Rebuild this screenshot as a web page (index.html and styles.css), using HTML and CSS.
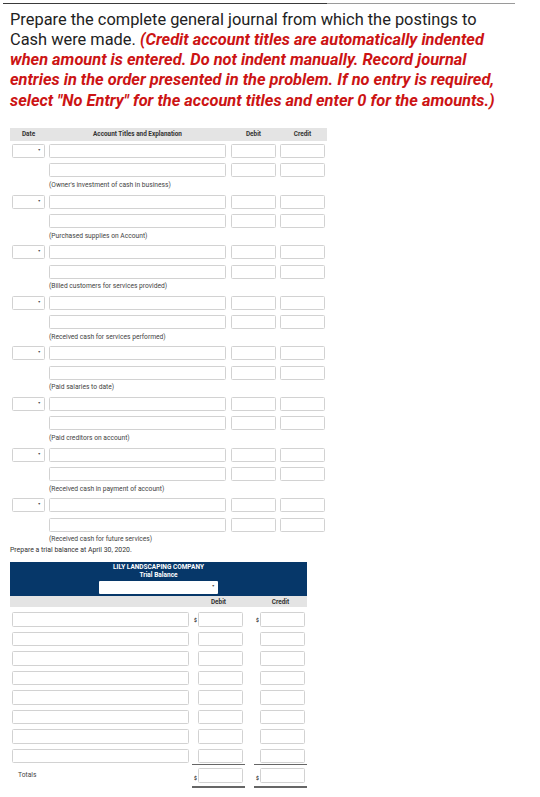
FILE: index.html
```html
<!DOCTYPE html>
<html lang="en">
<head>
<meta charset="utf-8">
<title>General Journal</title>
<link rel="stylesheet" href="styles.css">
</head>
<body>
<div class="topline"><span class="seg-dark"></span><span class="seg-light"></span></div>
<p class="prompt">Prepare the complete general journal from which the postings to Cash were made. <em class="note">(Credit account titles are automatically indented when amount is entered. Do not indent manually. Record journal entries in the order presented in the problem. If no entry is required, select "No Entry" for the account titles and enter 0 for the amounts.)</em></p>

<section class="journal">
  <div class="jgrid jhead">
    <span>Date</span><span>Account Titles and Explanation</span><span>Debit</span><span>Credit</span>
  </div>
  <div class="entries">
    <div class="entry">
      <div class="jgrid jrow"><span class="field sel"><span class="arrow">&#9660;</span></span><span class="field"></span><span class="field"></span><span class="field"></span></div>
      <div class="jgrid jrow"><span></span><span class="field"></span><span class="field"></span><span class="field"></span></div>
      <div class="expl">(Owner's investment of cash in business)</div>
    </div>
    <div class="entry">
      <div class="jgrid jrow"><span class="field sel"><span class="arrow">&#9660;</span></span><span class="field"></span><span class="field"></span><span class="field"></span></div>
      <div class="jgrid jrow"><span></span><span class="field"></span><span class="field"></span><span class="field"></span></div>
      <div class="expl">(Purchased supplies on Account)</div>
    </div>
    <div class="entry">
      <div class="jgrid jrow"><span class="field sel"><span class="arrow">&#9660;</span></span><span class="field"></span><span class="field"></span><span class="field"></span></div>
      <div class="jgrid jrow"><span></span><span class="field"></span><span class="field"></span><span class="field"></span></div>
      <div class="expl">(Billed customers for services provided)</div>
    </div>
    <div class="entry">
      <div class="jgrid jrow"><span class="field sel"><span class="arrow">&#9660;</span></span><span class="field"></span><span class="field"></span><span class="field"></span></div>
      <div class="jgrid jrow"><span></span><span class="field"></span><span class="field"></span><span class="field"></span></div>
      <div class="expl">(Received cash for services performed)</div>
    </div>
    <div class="entry">
      <div class="jgrid jrow"><span class="field sel"><span class="arrow">&#9660;</span></span><span class="field"></span><span class="field"></span><span class="field"></span></div>
      <div class="jgrid jrow"><span></span><span class="field"></span><span class="field"></span><span class="field"></span></div>
      <div class="expl">(Paid salaries to date)</div>
    </div>
    <div class="entry">
      <div class="jgrid jrow"><span class="field sel"><span class="arrow">&#9660;</span></span><span class="field"></span><span class="field"></span><span class="field"></span></div>
      <div class="jgrid jrow"><span></span><span class="field"></span><span class="field"></span><span class="field"></span></div>
      <div class="expl">(Paid creditors on account)</div>
    </div>
    <div class="entry">
      <div class="jgrid jrow"><span class="field sel"><span class="arrow">&#9660;</span></span><span class="field"></span><span class="field"></span><span class="field"></span></div>
      <div class="jgrid jrow"><span></span><span class="field"></span><span class="field"></span><span class="field"></span></div>
      <div class="expl">(Received cash in payment of account)</div>
    </div>
    <div class="entry">
      <div class="jgrid jrow"><span class="field sel"><span class="arrow">&#9660;</span></span><span class="field"></span><span class="field"></span><span class="field"></span></div>
      <div class="jgrid jrow"><span></span><span class="field"></span><span class="field"></span><span class="field"></span></div>
      <div class="expl">(Received cash for future services)</div>
    </div>
  </div>
</section>

<p class="tbprompt">Prepare a trial balance at April 30, 2020.</p>

<section class="tb">
  <div class="tbhead">
    <div class="tbtitle">LILY LANDSCAPING COMPANY</div>
    <div class="tbtitle">Trial Balance</div>
    <span class="field tbsel"><span class="arrow">&#9660;</span></span>
  </div>
  <div class="tbgrid tbcols"><span></span><span class="colh">Debit</span><span class="colh">Credit</span></div>
  <div class="tbrows">
    <div class="tbgrid tbrow"><span class="field"></span><span class="money"><span class="cur">$</span><span class="field amt"></span></span><span class="money"><span class="cur">$</span><span class="field amt"></span></span></div>
    <div class="tbgrid tbrow"><span class="field"></span><span class="money"><span class="field amt"></span></span><span class="money"><span class="field amt"></span></span></div>
    <div class="tbgrid tbrow"><span class="field"></span><span class="money"><span class="field amt"></span></span><span class="money"><span class="field amt"></span></span></div>
    <div class="tbgrid tbrow"><span class="field"></span><span class="money"><span class="field amt"></span></span><span class="money"><span class="field amt"></span></span></div>
    <div class="tbgrid tbrow"><span class="field"></span><span class="money"><span class="field amt"></span></span><span class="money"><span class="field amt"></span></span></div>
    <div class="tbgrid tbrow"><span class="field"></span><span class="money"><span class="field amt"></span></span><span class="money"><span class="field amt"></span></span></div>
    <div class="tbgrid tbrow"><span class="field"></span><span class="money"><span class="field amt"></span></span><span class="money"><span class="field amt"></span></span></div>
    <div class="tbgrid tbrow last"><span class="field"></span><span class="money"><span class="field amt"></span></span><span class="money"><span class="field amt"></span></span></div>
  </div>
  <div class="tbgrid totals"><span class="tlabel">Totals</span><span class="money"><span class="cur">$</span><span class="field amt"></span></span><span class="money"><span class="cur">$</span><span class="field amt"></span></span></div>
</section>
</body>
</html>
```

FILE: styles.css
```css
html, body {
  margin: 0;
  padding: 0;
  background: #ffffff;
}
body {
  font-family: Roboto, "Liberation Sans", Arial, sans-serif;
  color: #222;
}
.topline {
  display: flex;
  margin: 3px 0 0 3px;
  width: 512px;
  height: 1px;
}
.seg-dark { flex: 0 0 324px; background: #3a3a3a; }
.seg-light { flex: 1 1 auto; background: #9a9a9a; }

.prompt {
  margin: 5.5px 0 0 10px;
  width: 505px;
  font-size: 16.4px;
  line-height: 20.3px;
  color: #222;
}
.note {
  color: #cc1414;
  font-weight: 700;
  font-style: italic;
}

.journal {
  margin: 17px 0 0 10px;
  width: 317px;
}
.jgrid {
  display: grid;
  grid-template-columns: 33px 178px 45px 45px;
  column-gap: 4px;
  padding-left: 2px;
}
.jgrid > :nth-child(2) { margin-right: 1px; }
.jhead {
  background: #e4e4e4;
  height: 13px;
  align-items: center;
  font-size: 6.4px;
  font-weight: 700;
  color: #333;
  text-align: center;
}
.entries {
  margin-top: 3px;
  display: flex;
  flex-direction: column;
  row-gap: 3.6px;
}
.entry {
  display: flex;
  flex-direction: column;
  row-gap: 5.5px;
}
.jrow { height: 14px; }
.field {
  display: block;
  box-sizing: border-box;
  height: 100%;
  border: 1px solid #d2d2d2;
  border-radius: 1.5px;
  background: #fff;
  position: relative;
}
.sel .arrow,
.tbsel .arrow {
  position: absolute;
  right: 3px;
  top: 50%;
  transform: translateY(-50%);
  font-size: 3.5px;
  line-height: 1;
  color: #555;
}
.expl {
  margin-top: -3px;
  line-height: 11px;
  font-size: 6.7px;
  color: #444;
  padding-left: 39px;
}

.tbprompt {
  margin: 0 0 0 10px;
  line-height: 10px;
  font-size: 6.9px;
  color: #333;
}

.tb {
  margin: 7px 0 0 10px;
  width: 297px;
}
.tbhead {
  background: #063769;
  color: #fff;
  height: 34px;
  box-sizing: border-box;
  padding-top: 2px;
  display: flex;
  flex-direction: column;
  align-items: center;
}
.tbtitle {
  font-size: 6.5px;
  font-weight: 700;
  line-height: 7.5px;
}
.tbsel {
  margin-top: 1.5px;
  width: 119px;
  height: 13.5px;
  flex: 0 0 auto;
  border: none;
  border-radius: 1px;
}
.tbgrid {
  display: grid;
  grid-template-columns: 177px 56px 62px;
  padding-left: 2px;
}
.tbgrid > :nth-child(2) { margin-left: 3px; }
.tbgrid > :nth-child(3) { margin-left: 9px; }
.tbcols {
  background: #e4e4e4;
  height: 11px;
  align-items: center;
  font-size: 6.4px;
  font-weight: 700;
  color: #333;
}
.colh { text-align: center; }
.tbrows {
  margin-top: 5px;
  display: flex;
  flex-direction: column;
  row-gap: 5px;
}
.tbrow { height: 14.5px; }
.money {
  display: flex;
  align-items: center;
  justify-content: flex-end;
  padding-right: 2px;
  position: relative;
}
.money .amt {
  width: 45px;
  flex: 0 0 45px;
}
.cur {
  position: absolute;
  left: 2px;
  top: 50%;
  transform: translateY(-30%);
  font-size: 5px;
  font-weight: 700;
  color: #333;
}
.tbrow.last { height: auto; }
.tbrow.last > .field { height: 14.5px; }
.tbrow.last .money {
  border-bottom: 1px solid #666;
  padding-bottom: 1px;
}
.tbrow.last .money .amt { height: 14.5px; }
.totals {
  margin-top: 3px;
}
.totals .tlabel {
  font-size: 6.7px;
  color: #444;
  padding-left: 6px;
  line-height: 15px;
}
.totals .money {
  padding-bottom: 3px;
  border-bottom: 2.5px solid #666;
}
.totals .money .amt { height: 15px; }
```
